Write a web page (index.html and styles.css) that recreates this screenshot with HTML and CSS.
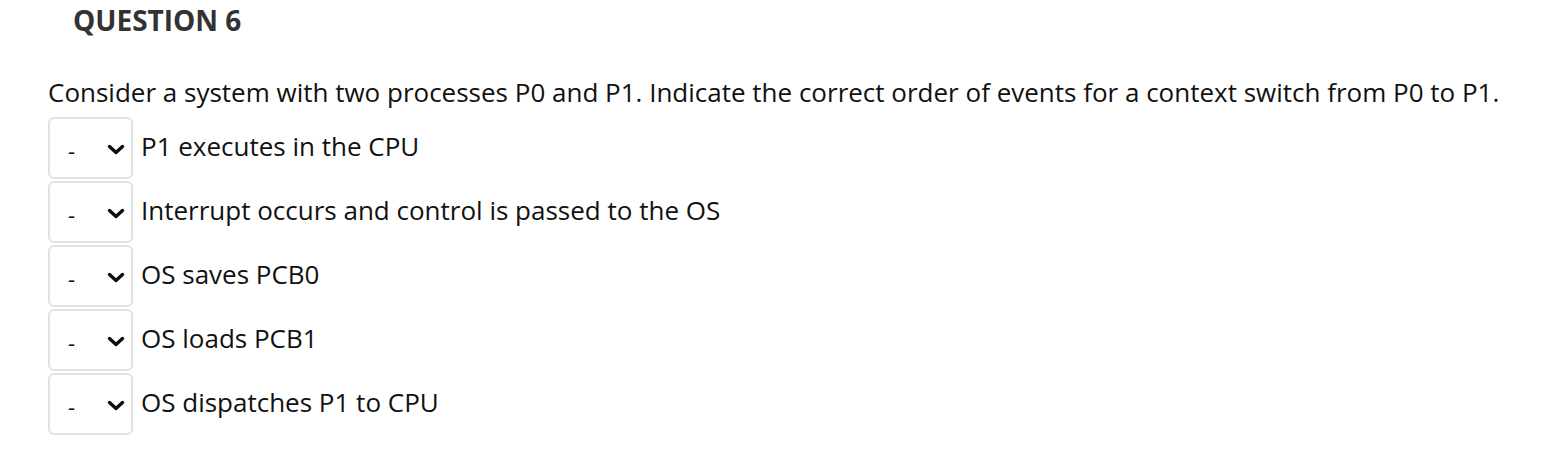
FILE: index.html
```html
<!DOCTYPE html>
<html lang="en">
<head>
    <meta charset="UTF-8">
    <title>Question 6</title>
    <link rel="stylesheet" href="styles.css">
</head>
<body>
    <div class="question">
        <h2 class="question-title">QUESTION 6</h2>
        <p class="question-text">Consider a system with two processes P0 and P1. Indicate the correct order of events for a context switch from P0 to P1.</p>
        <ul class="answers">
            <li class="answer">
                <span class="picker"><select><option>-</option></select><svg class="chevron" viewBox="0 0 18 11"><path d="M2.5 2.5 L9 8.5 L15.5 2.5" /></svg></span>
                <span class="answer-text">P1 executes in the CPU</span>
            </li>
            <li class="answer">
                <span class="picker"><select><option>-</option></select><svg class="chevron" viewBox="0 0 18 11"><path d="M2.5 2.5 L9 8.5 L15.5 2.5" /></svg></span>
                <span class="answer-text">Interrupt occurs and control is passed to the OS</span>
            </li>
            <li class="answer">
                <span class="picker"><select><option>-</option></select><svg class="chevron" viewBox="0 0 18 11"><path d="M2.5 2.5 L9 8.5 L15.5 2.5" /></svg></span>
                <span class="answer-text">OS saves PCB0</span>
            </li>
            <li class="answer">
                <span class="picker"><select><option>-</option></select><svg class="chevron" viewBox="0 0 18 11"><path d="M2.5 2.5 L9 8.5 L15.5 2.5" /></svg></span>
                <span class="answer-text">OS loads PCB1</span>
            </li>
            <li class="answer">
                <span class="picker"><select><option>-</option></select><svg class="chevron" viewBox="0 0 18 11"><path d="M2.5 2.5 L9 8.5 L15.5 2.5" /></svg></span>
                <span class="answer-text">OS dispatches P1 to CPU</span>
            </li>
        </ul>
    </div>
</body>
</html>
```

FILE: styles.css
```css
body {
    margin: 0;
    background: #fff;
    font-family: "Open Sans", sans-serif;
    color: #111;
}
.question {
    padding: 3px 0 0 48px;
}
.question-title {
    margin: 0 0 0 25px;
    font-size: 28px;
    font-weight: 700;
    color: #333;
    line-height: 34px;
}
.question-text {
    margin: 38px 0 0 0;
    font-size: 26px;
    line-height: 34px;
}
.answers {
    list-style: none;
    margin: 8px 0 0 0;
    padding: 0;
}
.answer {
    display: flex;
    align-items: center;
    margin-bottom: 2px;
}
.picker {
    position: relative;
    display: inline-block;
    width: 85px;
    height: 62px;
}
.picker select {
    appearance: none;
    -webkit-appearance: none;
    width: 100%;
    height: 100%;
    box-sizing: border-box;
    border: 2px solid #e2e2e2;
    border-radius: 6px;
    background: #fff;
    font-family: "Open Sans", sans-serif;
    font-size: 22px;
    color: #111;
    padding: 4px 0 0 18px;
}
/* dropdown arrow drawn over the native select */
.chevron {
    position: absolute;
    right: 8px;
    top: 27px;
    width: 18px;
    height: 11px;
    fill: none;
    stroke: #111;
    stroke-width: 3.4;
    stroke-linecap: round;
    stroke-linejoin: round;
    pointer-events: none;
}
.answer-text {
    margin-left: 8px;
    font-size: 26px;
    line-height: 34px;
    margin-top: -4px;
}
```
